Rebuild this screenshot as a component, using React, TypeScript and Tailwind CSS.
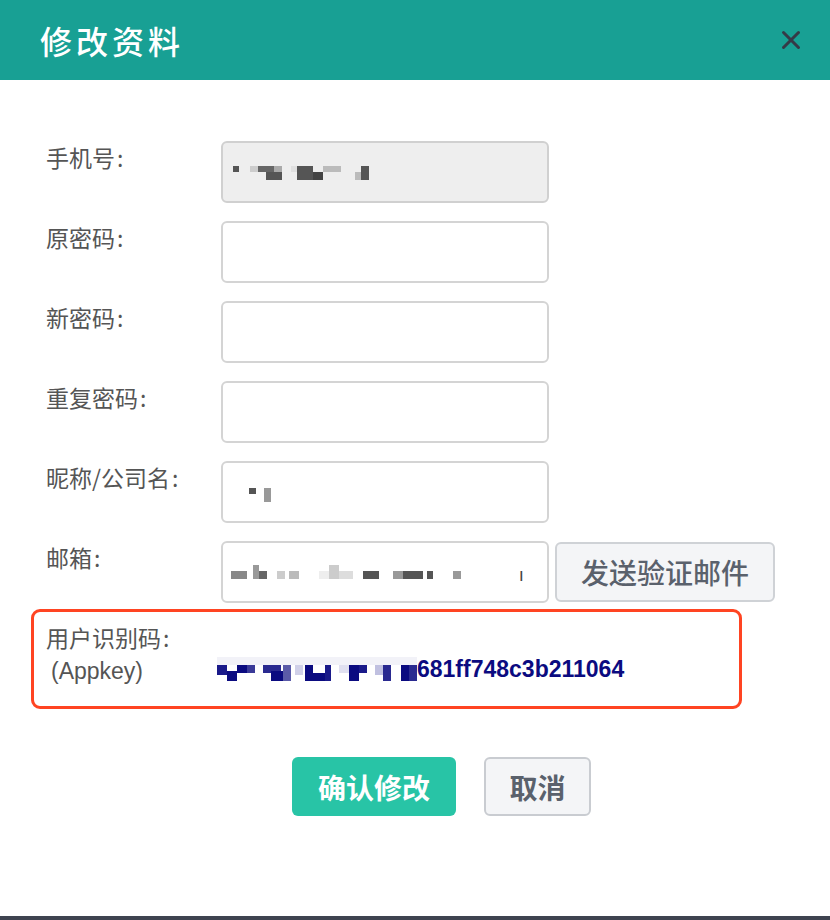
import { X } from "lucide-react";

type Block = [number, number, number, number, string];

// pixelated (masked) bits of the screenshot, drawn as little rects
function Mosaic({ blocks, w, h }: { blocks: Block[]; w: number; h: number }) {
  return (
    <svg width={w} height={h} viewBox={`0 0 ${w} ${h}`} className="block shrink-0">
      {blocks.map(([x, y, bw, bh, c], i) => (
        <rect key={i} x={x} y={y} width={bw} height={bh} fill={c} />
      ))}
    </svg>
  );
}

const phoneBlocks: Block[] = [
  [0, 4, 6, 6, "#555"],
  [17, 4, 8, 6, "#ccc"],
  [25, 4, 16, 6, "#666"],
  [33, 10, 16, 8, "#555"],
  [41, 4, 8, 6, "#aaa"],
  [58, 4, 10, 6, "#e0e0e0"],
  [64, 4, 16, 14, "#555"],
  [80, 10, 10, 8, "#444"],
  [90, 4, 18, 6, "#bbb"],
  [122, 10, 6, 8, "#bbb"],
  [128, 4, 8, 14, "#555"],
];

const nickBlocks: Block[] = [
  [0, 2, 7, 6, "#555"],
  [15, 2, 7, 14, "#999"],
];

const mailBlocks: Block[] = [
  [0, 6, 16, 8, "#888"],
  [22, 0, 6, 14, "#999"],
  [28, 6, 8, 8, "#666"],
  [46, 6, 8, 8, "#ccc"],
  [58, 6, 10, 8, "#bbb"],
  [88, 6, 10, 8, "#eee"],
  [98, 0, 10, 14, "#ccc"],
  [108, 6, 14, 8, "#ddd"],
  [132, 6, 16, 8, "#555"],
  [162, 6, 10, 8, "#999"],
  [172, 6, 20, 8, "#555"],
  [196, 6, 6, 8, "#555"],
  [222, 6, 8, 8, "#999"],
];

const keyBlocks: Block[] = [
  [0, 0, 200, 8, "#f2f2f8"],
  [0, 8, 10, 10, "#1a1a8a"],
  [10, 14, 10, 10, "#0b0b80"],
  [20, 8, 10, 8, "#0b0b80"],
  [30, 8, 8, 8, "#3a3a98"],
  [46, 8, 18, 8, "#2a2a90"],
  [54, 14, 12, 10, "#0b0b80"],
  [66, 8, 8, 16, "#5a5aa8"],
  [78, 8, 8, 10, "#d0d0e8"],
  [88, 8, 8, 16, "#0b0b80"],
  [96, 16, 12, 8, "#0b0b80"],
  [108, 8, 6, 16, "#1a1a8a"],
  [122, 8, 12, 8, "#e0e0f0"],
  [132, 8, 10, 16, "#0b0b80"],
  [142, 8, 8, 8, "#1a1a8a"],
  [158, 8, 8, 10, "#c0c0e0"],
  [166, 8, 8, 16, "#2a2a90"],
  [184, 8, 8, 16, "#0b0b80"],
  [192, 8, 8, 16, "#2a2a90"],
];

function Label({ text }: { text: string }) {
  return (
    <span>
      {text}
      <span className="ml-[2px]">:</span>
    </span>
  );
}

function Field({
  label,
  disabled,
  children,
  extra,
}: {
  label: string;
  disabled?: boolean;
  children?: React.ReactNode;
  extra?: React.ReactNode;
}) {
  return (
    <div className="flex items-start">
      <div className="w-[175px] pt-[1px] text-[23px] leading-[30px] text-[#555]">
        <Label text={label} />
      </div>
      <div
        className={
          "flex h-[62px] w-[328px] items-center rounded-[6px] border-2 px-[8px] " +
          (disabled ? "border-[#d0d0d0] bg-[#eeeeee]" : "border-[#d4d4d4] bg-white")
        }
      >
        {children}
      </div>
      {extra}
    </div>
  );
}

export default function App() {
  return (
    <div
      className="flex h-[920px] w-[830px] flex-col bg-white"
      style={{ fontFamily: '"Noto Sans CJK SC", "Noto Sans", sans-serif' }}
    >
      <div className="flex h-[80px] shrink-0 items-center justify-between bg-[#18a094] pl-[40px] pr-[24px]">
        <h1 className="text-[32px] font-medium leading-none tracking-[4px] text-white">修改资料</h1>
        <X className="h-[30px] w-[30px] text-[#353a47]" strokeWidth={2.4} />
      </div>

      <div className="flex flex-1 flex-col pl-[46px] pt-[61px]">
        <div className="flex flex-col gap-[18px]">
          <Field label="手机号" disabled>
            <div className="pl-[2px]">
              <Mosaic blocks={phoneBlocks} w={140} h={20} />
            </div>
          </Field>
          <Field label="原密码" />
          <Field label="新密码" />
          <Field label="重复密码" />
          <Field label="昵称/公司名">
            <div className="pl-[18px] pt-[6px]">
              <Mosaic blocks={nickBlocks} w={24} h={18} />
            </div>
          </Field>
          <Field
            label="邮箱"
            extra={
              <button className="ml-[6px] mt-[1px] h-[60px] w-[220px] rounded-[6px] border-2 border-[#cfd2d6] bg-[#f4f5f7] text-[28px] font-medium text-[#5a616c]">
                发送验证邮件
              </button>
            }
          >
            <div className="flex items-center pt-[2px]">
              <Mosaic blocks={mailBlocks} w={232} h={16} />
              <span className="ml-[56px] text-[18px] text-[#444]">ı</span>
            </div>
          </Field>
        </div>

        <div className="-ml-[15px] mt-[6px] flex h-[100px] w-[711px] items-start rounded-[9px] border-[3px] border-[#ff4422] pl-[12px] pt-[8px]">
          <div className="w-[171px] text-[23px] leading-[34px] text-[#555]">
            <Label text="用户识别码" />
            <div className="pl-[5px]" style={{ fontFamily: '"Liberation Sans", Arial, sans-serif' }}>
              (Appkey)
            </div>
          </div>
          <div className="mt-[37px] flex items-center">
            <Mosaic blocks={keyBlocks} w={200} h={24} />
            <span
              className="text-[23px] font-bold leading-[24px] text-[#0b0b80]"
              style={{ fontFamily: '"Liberation Sans", Arial, sans-serif' }}
            >
              681ff748c3b211064
            </span>
          </div>
        </div>

        <div className="mt-[48px] flex gap-[28px] pl-[246px]">
          <button className="h-[59px] w-[164px] rounded-[6px] bg-[#28c4a6] text-[28px] font-bold text-white">
            确认修改
          </button>
          <button className="h-[59px] w-[107px] rounded-[6px] border-2 border-[#c9ccd1] bg-[#f4f5f7] text-[28px] font-bold text-[#5a616c]">
            取消
          </button>
        </div>
      </div>

      <div className="h-[4px] shrink-0 bg-[#3e4350]" />
    </div>
  );
}
